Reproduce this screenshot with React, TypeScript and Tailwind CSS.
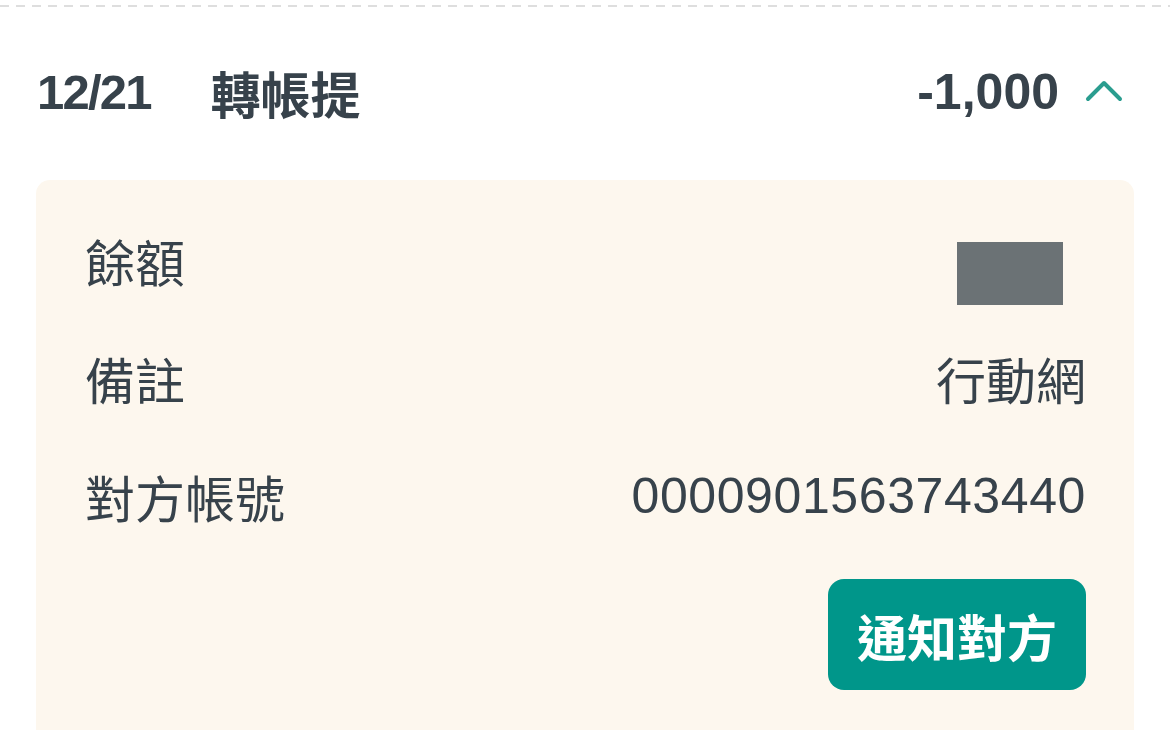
import React from "react";

const latin = { fontFamily: '"Liberation Sans", Arial, "Noto Sans CJK TC", sans-serif' };
const cjk = { fontFamily: '"Noto Sans CJK TC", "Noto Sans", sans-serif' };

export default function App() {
  return (
    <div className="w-[1170px] h-[730px] overflow-hidden bg-white text-[#37424b]">
      <div className="mt-[5px] h-[2px] bg-[repeating-linear-gradient(90deg,#dedede_0px,#dedede_9px,transparent_9px,transparent_16px)]" />
      <div className="mt-[12px] h-[146px] flex items-center pl-[37px] pr-[47px]">
        <span className="text-[49px] font-bold leading-none tracking-[-1.8px]" style={latin}>12/21</span>
        <span className="ml-[60px] text-[50px] font-bold leading-none" style={cjk}>轉帳提</span>
        <span className="ml-auto text-[50px] font-bold leading-none" style={latin}>-1,000</span>
        <svg className="ml-[26px] mt-[-2px]" width="38" height="22" viewBox="0 0 38 22" fill="none">
          <polyline points="3,19 19,3 35,19" stroke="#2a9d8f" strokeWidth="4" strokeLinecap="round" strokeLinejoin="round" />
        </svg>
      </div>
      <div className="mt-[15px] mx-[36px] h-[600px] rounded-[14px] bg-[#fdf7ee] pl-[49px] pr-[48px] pt-[21px]">
        <div className="h-[118px] flex items-center justify-between">
          <span className="text-[50px] leading-none" style={cjk}>餘額</span>
          <span className="mt-[27px] mr-[23px] w-[106px] h-[63px] bg-[#6b7275]" />
        </div>
        <div className="h-[118px] flex items-center justify-between">
          <span className="text-[50px] leading-none" style={cjk}>備註</span>
          <span className="text-[50px] leading-none" style={cjk}>行動網</span>
        </div>
        <div className="h-[118px] flex items-center justify-between">
          <span className="text-[50px] leading-none" style={cjk}>對方帳號</span>
          <span className="text-[50px] leading-none tracking-[0.6px]" style={latin}>0000901563743440</span>
        </div>
        <div className="mt-[24px] flex justify-end">
          <div className="w-[258px] h-[111px] rounded-[16px] bg-[#00968a] flex items-center justify-center">
            <span className="text-[50px] font-bold leading-none text-white" style={cjk}>通知對方</span>
          </div>
        </div>
      </div>
    </div>
  );
}
